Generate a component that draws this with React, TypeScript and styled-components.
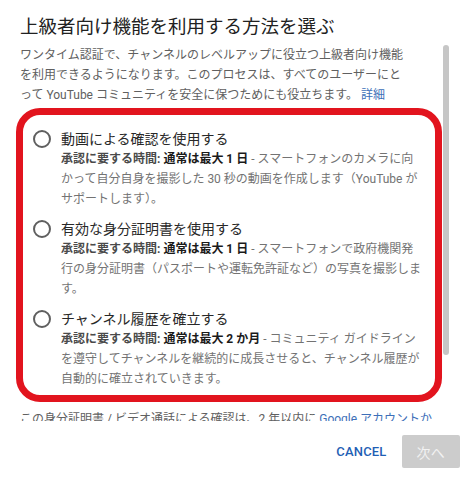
import React from 'react';
import styled, { createGlobalStyle } from 'styled-components';

const GlobalStyle = createGlobalStyle`
  html, body {
    margin: 0;
    padding: 0;
    background: #ffffff;
  }
  body {
    font-family: "Roboto", "Noto Sans CJK JP", sans-serif;
  }
`;

// Whole dialog fills the window.
const Dialog = styled.div`
  display: flex;
  flex-direction: column;
  height: 100vh;
  background: #ffffff;
  overflow: hidden;
`;

const Title = styled.h1`
  margin: 0;
  padding: 14px 20px 0;
  font-size: 18.5px;
  line-height: 26px;
  font-weight: 400;
  color: #212121;
`;

// Body: clipped content next to a slim scroll track.
const Body = styled.div`
  flex: 1;
  min-height: 0;
  display: flex;
  margin: 5px 24px 0 0;
`;

const Content = styled.div`
  flex: 1;
  min-width: 0;
  padding-left: 20px;
  overflow: hidden;
`;

const Track = styled.div`
  flex-shrink: 0;
  width: 8px;
  padding: 0 1px;
  box-sizing: border-box;
`;

const Thumb = styled.div<{ $size: number }>`
  height: ${p => p.$size}%;
  background: #c6c6c6;
  border-radius: 3px;
`;

const Description = styled.p`
  margin: 0;
  padding-right: 32px;
  font-size: 12px;
  line-height: 20px;
  color: #606060;
`;

const Link = styled.a`
  color: #3d6fb8;
  text-decoration: none;
  cursor: pointer;
`;

// The red highlight frame round the three choices.
const Options = styled.div`
  display: flex;
  flex-direction: column;
  gap: 10px;
  margin: 3px 0 0 -4px;
  padding: 14px 11px 6px 10px;
  border: 7px solid #e2141e;
  border-radius: 24px;
`;

const Option = styled.label`
  display: flex;
  gap: 10px;
  cursor: pointer;
`;

const Radio = styled.span`
  flex-shrink: 0;
  width: 14px;
  height: 14px;
  margin-top: 1px;
  border: 2px solid #5f5f5f;
  border-radius: 50%;
`;

const OptionText = styled.div`
  display: flex;
  flex-direction: column;
  min-width: 0;
`;

const OptionTitle = styled.span`
  font-size: 14px;
  line-height: 20px;
  color: #282828;
`;

const OptionDetail = styled.span`
  font-size: 12px;
  line-height: 20px;
  color: #737373;
`;

const Strong = styled.b<{ $dark?: boolean }>`
  font-weight: 700;
  color: ${p => (p.$dark ? '#1a1a1a' : '#4a4a4a')};
`;

const Footnote = styled.p`
  margin: 7px 0 0;
  padding: 0 8px 12px 0;
  font-size: 12px;
  line-height: 20px;
  color: #606060;
`;

const Footer = styled.div`
  display: flex;
  justify-content: flex-end;
  align-items: flex-start;
  gap: 4px;
  height: 58px;
  padding: 14px 14px 0 0;
  box-sizing: border-box;
  flex-shrink: 0;
`;

const Button = styled.button<{ $filled?: boolean }>`
  height: 33px;
  padding: 0 ${p => (p.$filled ? '15px' : '11px')};
  min-width: ${p => (p.$filled ? '57px' : 'auto')};
  border: none;
  border-radius: 2px;
  font-family: "Roboto", "Noto Sans CJK JP", sans-serif;
  font-size: ${p => (p.$filled ? '14px' : '13px')};
  font-weight: ${p => (p.$filled ? 400 : 500)};
  letter-spacing: 0.2px;
  background: ${p => (p.$filled ? '#cccccc' : 'transparent')};
  color: ${p => (p.$filled ? '#f2f2f2' : '#1f5fb5')};
  cursor: ${p => (p.$filled ? 'default' : 'pointer')};
`;

const choices = [
  {
    title: '動画による確認を使用する',
    time: '通常は最大 1 日',
    text: ' - スマートフォンのカメラに向かって自分自身を撮影した 30 秒の動画を作成します（YouTube がサポートします）。',
  },
  {
    title: '有効な身分証明書を使用する',
    time: '通常は最大 1 日',
    text: ' - スマートフォンで政府機関発行の身分証明書（パスポートや運転免許証など）の写真を撮影します。',
  },
  {
    title: 'チャンネル履歴を確立する',
    time: '通常は最大 2 か月',
    text: ' - コミュニティ ガイドラインを遵守してチャンネルを継続的に成長させると、チャンネル履歴が自動的に確立されていきます。',
  },
];

const App: React.FC = () => (
  <>
    <GlobalStyle />
    <Dialog>
      <Title>上級者向け機能を利用する方法を選ぶ</Title>
      <Body>
        <Content>
          <Description>
            ワンタイム認証で、チャンネルのレベルアップに役立つ上級者向け機能を利用できるようになります。このプロセスは、すべてのユーザーにとって YouTube コミュニティを安全に保つためにも役立ちます。 <Link>詳細</Link>
          </Description>
          <Options>
            {choices.map(c => (
              <Option key={c.title}>
                <Radio />
                <OptionText>
                  <OptionTitle>{c.title}</OptionTitle>
                  <OptionDetail>
                    <Strong>承認に要する時間:</Strong> <Strong $dark>{c.time}</Strong>
                    {c.text}
                  </OptionDetail>
                </OptionText>
              </Option>
            ))}
          </Options>
          <Footnote>
            この身分証明書 / ビデオ通話による確認は、2 年以内に <Link>Google アカウントから削除</Link>されます。動画や身分証明書の画像は確認の目的でのみ使用され、YouTube チャンネルで公開されることはありません。詳しくはプライバシー ポリシーをご覧ください。
          </Footnote>
        </Content>
        <Track>
          <Thumb $size={82.4} />
        </Track>
      </Body>
      <Footer>
        <Button>CANCEL</Button>
        <Button $filled disabled>次へ</Button>
      </Footer>
    </Dialog>
  </>
);

export default App;
